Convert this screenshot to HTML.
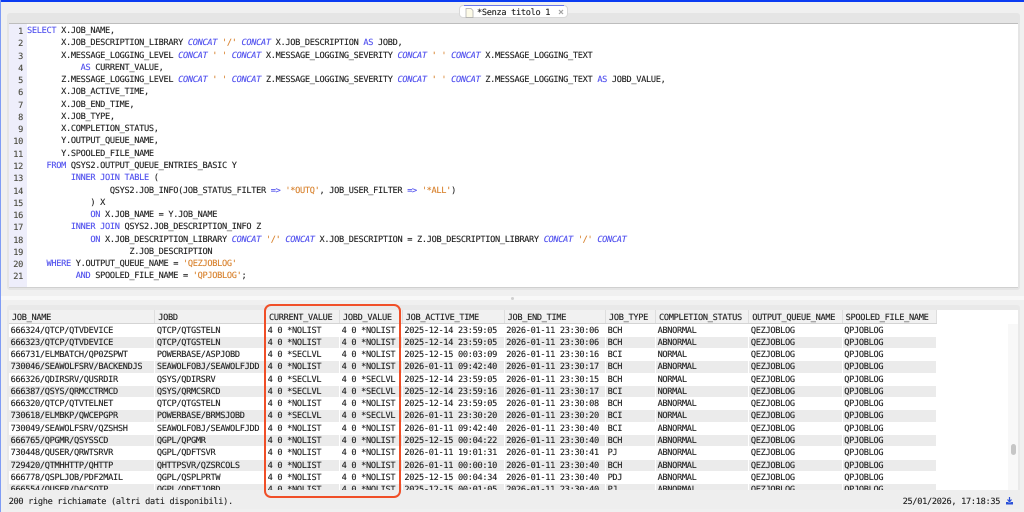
<!DOCTYPE html>
<html><head><meta charset="utf-8"><style>
*{box-sizing:border-box}
html,body{margin:0;padding:0;width:1024px;height:512px;overflow:hidden;background:#f0f0f0}
body{position:relative;font-family:"DejaVu Sans Mono","Liberation Mono",monospace;font-size:8.6px;letter-spacing:-.3px;color:#222;-webkit-text-stroke:.12px;text-rendering:geometricPrecision}
.a{position:absolute}
#root{position:absolute;inset:0;filter:blur(.3px)}
.l{position:absolute;left:27px;height:12.27px;line-height:13.8px;white-space:pre}
.n{position:absolute;left:9px;width:14px;text-align:right;height:12.27px;line-height:13.8px;color:#4c4c40}
b{font-weight:normal;color:#5050ee}
i{color:#5050ee}
u{text-decoration:none;color:#d8822e}
.r{position:absolute;left:0;height:12.27px;width:929px;display:grid;grid-template-columns:146.3px 110.7px 74px 62.8px 101.9px 101.3px 50px 93.3px 93.4px 94.6px}
.r span{display:block;height:11.4px;margin-top:.6px;line-height:12.8px;padding-left:1.6px;border-right:1px solid #fff;white-space:pre;overflow:hidden}
.e span{background:#ebebeb}
.h{position:absolute;left:9px;top:310px;height:14px;width:928.3px;display:grid;grid-template-columns:146.3px 110.7px 74px 62.8px 101.9px 101.3px 50px 93.3px 93.4px 94.6px;background:#f1f1f1;border-bottom:1px solid #d4d4d4}
.h span{line-height:16px;height:13px;padding-left:3px;border-right:1px solid #dedede;white-space:pre}
</style></head><body>
<div id="root">
<div class="a" style="left:0;top:0;width:1024px;height:2px;background:#0b3cf2"></div>
<div class="a" style="left:0;top:0;width:1px;height:512px;background:#7f9cf5"></div>
<div class="a" style="left:7px;top:13px;width:1013px;height:277px;background:#e5e5e5;border-radius:3px"></div>
<div class="a" style="left:9px;top:23px;width:1009px;height:265px;background:#fff;border-top:1px solid #bdbdbd;border-bottom:1px solid #d0d0d0"></div>
<div class="a" style="left:9px;top:24px;width:18px;height:263px;background:#eeeefb"></div>

<div class="a" style="left:459px;top:5px;width:109px;height:13px;background:#fff;border:1px solid #d8d8d8;border-radius:4px"></div>
<div class="a" style="left:464px;top:5px;width:100px;height:1px;background:#6a78e8"></div>
<svg class="a" style="left:465px;top:8px" width="9" height="10" viewBox="0 0 9 10"><path d="M1 .5H6L8 2.5V9.500H1Z" fill="#fdfbe8" stroke="#a8a8a8" stroke-width=".7"/></svg>
<div class="a" style="left:477px;top:7px;line-height:12px;white-space:pre">*Senza titolo 1</div>
<svg class="a" style="left:558px;top:9px" width="6" height="6" viewBox="0 0 6 6"><path d="M1 1L5 5M5 1L1 5" stroke="#a0a0a0" stroke-width="1.200"/></svg>

<div class="n" style="top:26px">1</div><div class="n" style="top:38.3px">2</div><div class="n" style="top:50.500px">3</div><div class="n" style="top:62.800px">4</div><div class="n" style="top:75.100px">5</div><div class="n" style="top:87.400px">6</div><div class="n" style="top:99.600px">7</div><div class="n" style="top:111.900px">8</div><div class="n" style="top:124.200px">9</div><div class="n" style="top:136.400px">10</div><div class="n" style="top:148.700px">11</div><div class="n" style="top:161px">12</div><div class="n" style="top:173.200px">13</div><div class="n" style="top:185.500px">14</div><div class="n" style="top:197.800px">15</div><div class="n" style="top:210.100px">16</div><div class="n" style="top:222.300px">17</div><div class="n" style="top:234.600px">18</div><div class="n" style="top:246.900px">19</div><div class="n" style="top:259.100px">20</div><div class="n" style="top:271.400px">21</div>

<div class="l" style="top:25px"><b>SELECT</b> X.JOB_NAME,</div>
<div class="l" style="top:37.3px">       X.JOB_DESCRIPTION_LIBRARY <i>CONCAT</i> <u>'/'</u> <i>CONCAT</i> X.JOB_DESCRIPTION <b>AS</b> JOBD,</div>
<div class="l" style="top:49.500px">       X.MESSAGE_LOGGING_LEVEL <i>CONCAT</i> <u>' '</u> <i>CONCAT</i> X.MESSAGE_LOGGING_SEVERITY <i>CONCAT</i> <u>' '</u> <i>CONCAT</i> X.MESSAGE_LOGGING_TEXT</div>
<div class="l" style="top:61.800px">           <b>AS</b> CURRENT_VALUE,</div>
<div class="l" style="top:74.100px">       Z.MESSAGE_LOGGING_LEVEL <i>CONCAT</i> <u>' '</u> <i>CONCAT</i> Z.MESSAGE_LOGGING_SEVERITY <i>CONCAT</i> <u>' '</u> <i>CONCAT</i> Z.MESSAGE_LOGGING_TEXT <b>AS</b> JOBD_VALUE,</div>
<div class="l" style="top:86.400px">       X.JOB_ACTIVE_TIME,</div>
<div class="l" style="top:98.600px">       X.JOB_END_TIME,</div>
<div class="l" style="top:110.900px">       X.JOB_TYPE,</div>
<div class="l" style="top:123.200px">       X.COMPLETION_STATUS,</div>
<div class="l" style="top:135.400px">       Y.OUTPUT_QUEUE_NAME,</div>
<div class="l" style="top:147.700px">       Y.SPOOLED_FILE_NAME</div>
<div class="l" style="top:160px">    <b>FROM</b> QSYS2.OUTPUT_QUEUE_ENTRIES_BASIC Y</div>
<div class="l" style="top:172.200px">         <b>INNER JOIN TABLE</b> (</div>
<div class="l" style="top:184.500px">                 QSYS2.JOB_INFO(JOB_STATUS_FILTER <b>=&gt;</b> <u>'*OUTQ'</u>, JOB_USER_FILTER <b>=&gt;</b> <u>'*ALL'</u>)</div>
<div class="l" style="top:196.800px">             ) X</div>
<div class="l" style="top:209.100px">             <b>ON</b> X.JOB_NAME = Y.JOB_NAME</div>
<div class="l" style="top:221.300px">         <b>INNER JOIN</b> QSYS2.JOB_DESCRIPTION_INFO Z</div>
<div class="l" style="top:233.600px">             <b>ON</b> X.JOB_DESCRIPTION_LIBRARY <i>CONCAT</i> <u>'/'</u> <i>CONCAT</i> X.JOB_DESCRIPTION = Z.JOB_DESCRIPTION_LIBRARY <i>CONCAT</i> <u>'/'</u> <i>CONCAT</i></div>
<div class="l" style="top:245.900px">                     Z.JOB_DESCRIPTION</div>
<div class="l" style="top:258.100px">    <b>WHERE</b> Y.OUTPUT_QUEUE_NAME = <u>'QEZJOBLOG'</u></div>
<div class="l" style="top:270.400px">          <b>AND</b> SPOOLED_FILE_NAME = <u>'QPJOBLOG'</u>;</div>

<div class="a" style="left:1px;top:296px;width:1023px;height:4px;background:#f8f8f8"></div>
<div class="a" style="left:511px;top:297px;width:3px;height:3px;background:#d0d0d0;border-radius:2px"></div>
<div class="a" style="left:7px;top:305px;width:1013px;height:204px;background:#e9e9e9;border-radius:3px"></div>
<div class="a" style="left:9px;top:310px;width:1009px;height:180px;background:#fff"></div>
<div class="a" style="left:1008px;top:324px;width:10px;height:166px;background:#f8f8f8"></div>
<div class="a" style="left:1011px;top:444px;width:5px;height:11px;background:#c6c6c6;border-radius:3px"></div>

<div class="h"><span>JOB_NAME</span><span>JOBD</span><span>CURRENT_VALUE</span><span>JOBD_VALUE</span><span>JOB_ACTIVE_TIME</span><span>JOB_END_TIME</span><span>JOB_TYPE</span><span>COMPLETION_STATUS</span><span>OUTPUT_QUEUE_NAME</span><span>SPOOLED_FILE_NAME</span></div>

<div class="a" style="left:9px;top:324px;width:929px;height:166px;overflow:hidden">
<div class="r" style="top:0"><span>666324/QTCP/QTVDEVICE</span><span>QTCP/QTGSTELN</span><span>4 0 *NOLIST</span><span>4 0 *NOLIST</span><span>2025-12-14 23:59:05</span><span>2026-01-11 23:30:06</span><span>BCH</span><span>ABNORMAL</span><span>QEZJOBLOG</span><span>QPJOBLOG</span></div>
<div class="r e" style="top:12.27px"><span>666323/QTCP/QTVDEVICE</span><span>QTCP/QTGSTELN</span><span>4 0 *NOLIST</span><span>4 0 *NOLIST</span><span>2025-12-14 23:59:05</span><span>2026-01-11 23:30:06</span><span>BCH</span><span>ABNORMAL</span><span>QEZJOBLOG</span><span>QPJOBLOG</span></div>
<div class="r" style="top:24.54px"><span>666731/ELMBATCH/QP0ZSPWT</span><span>POWERBASE/ASPJOBD</span><span>4 0 *SECLVL</span><span>4 0 *NOLIST</span><span>2025-12-15 00:03:09</span><span>2026-01-11 23:30:16</span><span>BCI</span><span>NORMAL</span><span>QEZJOBLOG</span><span>QPJOBLOG</span></div>
<div class="r e" style="top:36.81px"><span>730046/SEAWOLFSRV/BACKENDJS</span><span>SEAWOLFOBJ/SEAWOLFJDD</span><span>4 0 *NOLIST</span><span>4 0 *NOLIST</span><span>2026-01-11 09:42:40</span><span>2026-01-11 23:30:17</span><span>BCH</span><span>ABNORMAL</span><span>QEZJOBLOG</span><span>QPJOBLOG</span></div>
<div class="r" style="top:49.08px"><span>666326/QDIRSRV/QUSRDIR</span><span>QSYS/QDIRSRV</span><span>4 0 *SECLVL</span><span>4 0 *SECLVL</span><span>2025-12-14 23:59:05</span><span>2026-01-11 23:30:15</span><span>BCH</span><span>NORMAL</span><span>QEZJOBLOG</span><span>QPJOBLOG</span></div>
<div class="r e" style="top:61.35px"><span>666387/QSYS/QRMCCTRMCD</span><span>QSYS/QRMCSRCD</span><span>4 0 *SECLVL</span><span>4 0 *SECLVL</span><span>2025-12-14 23:59:16</span><span>2026-01-11 23:30:17</span><span>BCI</span><span>NORMAL</span><span>QEZJOBLOG</span><span>QPJOBLOG</span></div>
<div class="r" style="top:73.62px"><span>666320/QTCP/QTVTELNET</span><span>QTCP/QTGSTELN</span><span>4 0 *NOLIST</span><span>4 0 *NOLIST</span><span>2025-12-14 23:59:05</span><span>2026-01-11 23:30:08</span><span>BCH</span><span>ABNORMAL</span><span>QEZJOBLOG</span><span>QPJOBLOG</span></div>
<div class="r e" style="top:85.89px"><span>730618/ELMBKP/QWCEPGPR</span><span>POWERBASE/BRMSJOBD</span><span>4 0 *SECLVL</span><span>4 0 *SECLVL</span><span>2026-01-11 23:30:20</span><span>2026-01-11 23:30:20</span><span>BCI</span><span>NORMAL</span><span>QEZJOBLOG</span><span>QPJOBLOG</span></div>
<div class="r" style="top:98.16px"><span>730049/SEAWOLFSRV/QZSHSH</span><span>SEAWOLFOBJ/SEAWOLFJDD</span><span>4 0 *NOLIST</span><span>4 0 *NOLIST</span><span>2026-01-11 09:42:40</span><span>2026-01-11 23:30:40</span><span>BCI</span><span>ABNORMAL</span><span>QEZJOBLOG</span><span>QPJOBLOG</span></div>
<div class="r e" style="top:110.43px"><span>666765/QPGMR/QSYSSCD</span><span>QGPL/QPGMR</span><span>4 0 *NOLIST</span><span>4 0 *NOLIST</span><span>2025-12-15 00:04:22</span><span>2026-01-11 23:30:40</span><span>BCH</span><span>ABNORMAL</span><span>QEZJOBLOG</span><span>QPJOBLOG</span></div>
<div class="r" style="top:122.7px"><span>730448/QUSER/QRWTSRVR</span><span>QGPL/QDFTSVR</span><span>4 0 *NOLIST</span><span>4 0 *NOLIST</span><span>2026-01-11 19:01:31</span><span>2026-01-11 23:30:41</span><span>PJ</span><span>ABNORMAL</span><span>QEZJOBLOG</span><span>QPJOBLOG</span></div>
<div class="r e" style="top:134.97px"><span>729420/QTMHHTTP/QHTTP</span><span>QHTTPSVR/QZSRCOLS</span><span>4 0 *NOLIST</span><span>4 0 *NOLIST</span><span>2026-01-11 00:00:10</span><span>2026-01-11 23:30:40</span><span>BCH</span><span>ABNORMAL</span><span>QEZJOBLOG</span><span>QPJOBLOG</span></div>
<div class="r" style="top:147.24px"><span>666778/QSPLJOB/PDF2MAIL</span><span>QGPL/QSPLPRTW</span><span>4 0 *NOLIST</span><span>4 0 *NOLIST</span><span>2025-12-15 00:04:34</span><span>2026-01-11 23:30:40</span><span>PDJ</span><span>ABNORMAL</span><span>QEZJOBLOG</span><span>QPJOBLOG</span></div>
<div class="r e" style="top:159.51px"><span>666554/QUSER/DACSOTP</span><span>QGPL/QDFTJOBD</span><span>4 0 *NOLIST</span><span>4 0 *NOLIST</span><span>2025-12-15 00:01:05</span><span>2026-01-11 23:30:40</span><span>PJ</span><span>ABNORMAL</span><span>QEZJOBLOG</span><span>QPJOBLOG</span></div>
</div>

<div class="a" style="left:7px;top:490px;width:1013px;height:19px;background:#eeeeee"></div>
<div class="a" style="left:8.700px;top:496px;line-height:13px;white-space:pre">200 righe richiamate (altri dati disponibili).</div>
<div class="a" style="left:902.700px;top:496px;line-height:13px;white-space:pre">25/01/2026, 17:18:35</div>
<svg class="a" style="left:1005px;top:497px" width="9" height="8" viewBox="0 0 9 8"><path d="M4.500 0V4M2.500 2.500L4.500 4.800L6.500 2.500" fill="none" stroke="#2a50d8" stroke-width="1.200"/><path d="M1 5H3L4.500 6L6 5H8V7.500H1Z" fill="#2a50d8"/></svg>

<div class="a" style="left:263.500px;top:303.500px;width:137px;height:194px;border:2.300px solid #f04f28;border-radius:7px"></div>
</div>
</body></html>
